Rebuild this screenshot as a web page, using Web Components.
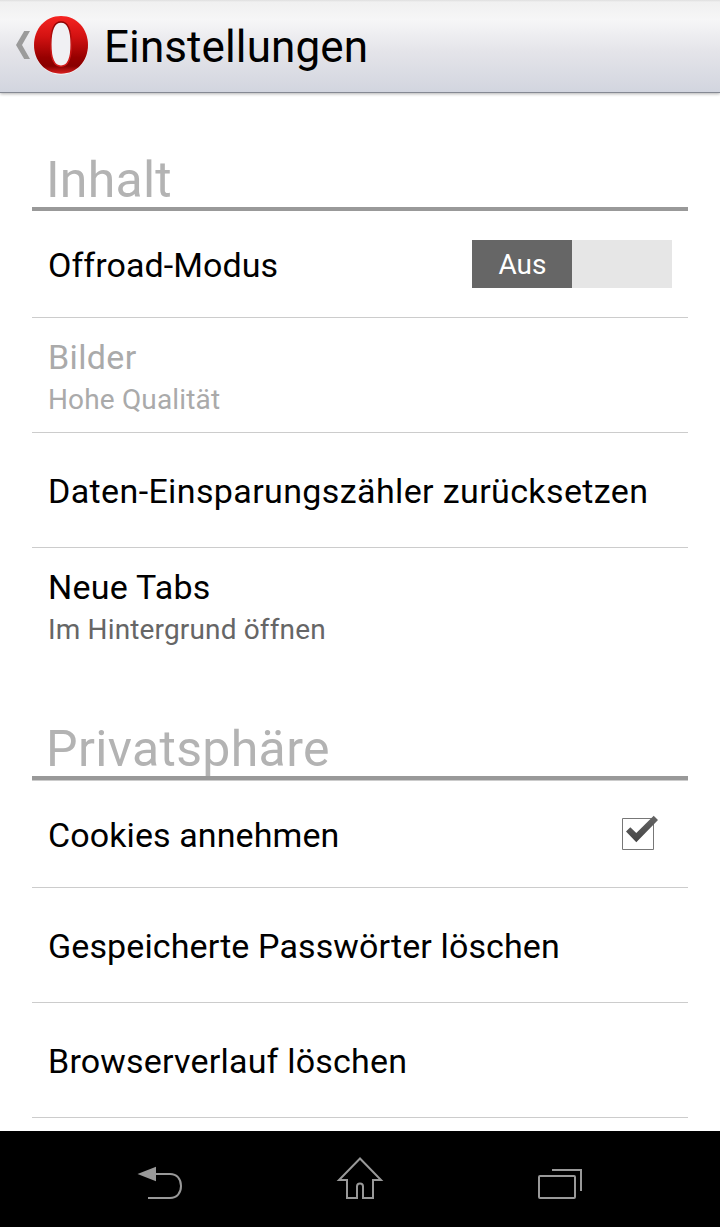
<!DOCTYPE html>
<html lang="de"><head><meta charset="utf-8"><title>Einstellungen</title>
<style>html,body{margin:0;height:100%;background:#fff}body{overflow:hidden;font-family:Roboto,"Liberation Sans",sans-serif;color:#000}</style></head>
<body>
<settings-page>
<app-header slot="header">Einstellungen</app-header>
<settings-section><section-title slot="title" style="--space:.25px">Inhalt</section-title>
<settings-row style="--h:107px;--space:.07px">Offroad-Modus<toggle-switch slot="control">Aus</toggle-switch></settings-row>
<settings-row double disabled style="--space:.35px">Bilder<span slot="summary">Hohe Qualität</span></settings-row>
<settings-row style="--space:.38px">Daten-Einsparungszähler zurücksetzen</settings-row>
<settings-row double last style="--space:.25px">Neue Tabs<span slot="summary">Im Hintergrund öffnen</span></settings-row>
</settings-section>
<settings-section><section-title slot="title" style="--h:117px;--space:.35px">Privatsphäre</section-title>
<settings-row style="--h:108px;--space:.1px;--edge:#ccc">Cookies annehmen<check-box slot="control"></check-box></settings-row>
<settings-row style="--space:.11px">Gespeicherte Passwörter löschen</settings-row>
<settings-row style="--space:.2px">Browserverlauf löschen</settings-row>
</settings-section>
<nav-bar slot="nav"></nav-bar>
</settings-page>
<script>
const define=(name,html)=>{const t=document.createElement('template');t.innerHTML=html;
customElements.define(name,class extends HTMLElement{constructor(){super();this.attachShadow({mode:'open'}).append(t.content.cloneNode(true));}});};

define('settings-page',`<style>:host{display:flex;flex-direction:column;height:1227px;width:720px;background:#fff}
main{flex:1;min-height:0;overflow:hidden;padding:0 32px}</style>
<slot name="header"></slot><main><slot></slot></main><slot name="nav"></slot>`);

define('app-header',`<style>:host{display:flex;align-items:center;box-sizing:border-box;height:93px;flex:none;padding:0 0 0 15px;border-bottom:1px solid #858993;background:linear-gradient(#dedede 0,#f0f0f0 2px,#f6f6f7 20px,#e4e4e9 52px,#d2d5df 92px);box-shadow:0 1px 3px rgba(0,0,0,.3);font-size:44px;line-height:60px;letter-spacing:.1px;position:relative}
svg{display:block;flex:none}.t{margin-left:14px;padding-top:1px}</style>
<svg width="75" height="92" viewBox="15 0 75 92"><defs><linearGradient id="r" x2="0" y2="1"><stop stop-color="#f52421"/><stop offset=".35" stop-color="#d41212"/><stop offset=".72" stop-color="#970000"/><stop offset=".87" stop-color="#890000"/><stop offset="1" stop-color="#da2020"/></linearGradient><linearGradient id="i" x2="0" y2="1"><stop stop-color="#8b0000"/><stop offset=".45" stop-color="#c01010"/><stop offset="1" stop-color="#d41818"/></linearGradient></defs>
<path d="M24.200 31H30L22 45 30 59h-5.800L16 45z" fill="#9b9b9b"/>
<ellipse cx="61" cy="46.2" rx="27.2" ry="28.6" fill="#f4f4f7"/>
<path fill="url(#r)" fill-rule="evenodd" d="M61 16C45 16 34 29 34 45s11 28.700 27 28.700S88 61 88 45 77 16 61 16z"/>
<path fill="#f0f0f3" stroke="url(#i)" stroke-width="1.500" d="M61 22c8 0 10.200 10 10.200 22.500S69 66.200 61 66.200 50.800 57 50.800 44.500 53 22 61 22z"/></svg><span class="t"><slot></slot></span>`);

define('settings-section',`<style>:host{display:block}</style><slot name="title"></slot><slot></slot>`);

define('section-title',`<style>:host{display:flex;align-items:flex-end;box-sizing:border-box;height:var(--h,118px);border-bottom:4px solid #999;padding:0 16px 0 14px;color:#b3b3b3;font-size:50px;line-height:54px;letter-spacing:var(--space,0)}</style><slot></slot>`);

define('settings-row',`<style>:host{display:flex;align-items:center;justify-content:space-between;box-sizing:border-box;height:var(--h,115px);border-bottom:1px solid #ccc;padding:2px 16px 0;font-size:34px;line-height:42px;white-space:nowrap;letter-spacing:var(--space,0);box-shadow:inset 0 1px var(--edge,transparent)}
:host([double]){padding-top:6px}:host([last]){border-color:transparent}:host([disabled]){color:#aaa;--sub:#aaa}
.text{display:flex;flex-direction:column}::slotted([slot=summary]){font-size:28px;line-height:42px;padding-top:1px;margin-bottom:-1px;letter-spacing:.15px;color:var(--sub,#666)}</style>
<div class="text"><div><slot></slot></div><slot name="summary"></slot></div><slot name="control"></slot>`);

define('toggle-switch',`<style>:host{display:grid;grid-template-columns:100px 100px;height:48px;margin-top:-2px;background:#e6e6e6;color:#fff;font-size:28px;line-height:46px;text-align:center}.on{box-sizing:border-box;height:48px;padding:2px 0 0 1px;background:#666}</style><div class="on"><slot></slot></div>`);

define('check-box',`<style>:host{display:block;width:36px;height:36px;margin:-4px 14px 0 0}svg{display:block}</style>
<svg width="36" height="36" viewBox="0 0 36 36"><defs><linearGradient id="c" x2="0" y2="1"><stop stop-color="#666"/><stop offset="1" stop-color="#444"/></linearGradient></defs><path d="M.5 3.500h31v31H.5z" fill="#fff" stroke="#777"/><path d="M4 16.500 8.300 12.200 14.300 18 31.700.800 36 5 14.300 27.200z" fill="url(#c)"/></svg>`);

define('nav-bar',`<style>:host{display:grid;grid-template-columns:repeat(3,200px);justify-content:center;align-items:center;justify-items:center;height:96px;flex:none;background:#000}svg{display:block;fill:none;stroke:#999;stroke-width:2}</style>
<svg width="200" height="96" viewBox="60 1131 200 96"><path d="M155 1174h15c7 0 11 5 11 12s-4 12-11 12h-22"/><path d="M137.500 1174l18.500-7.200v14.400z" fill="#999" stroke="none"/></svg>
<svg width="200" height="96" viewBox="260 1131 200 96"><path d="m360 1158.500-21 21.500h8v18h10v-11.500q0-3 3-3t3 3V1198h10v-18h8z"/></svg>
<svg width="200" height="96" viewBox="460 1131 200 96"><rect x="539" y="1176" width="36" height="22" rx="1"/><path d="M552 1170h29v21"/></svg>`);
</script></body></html>
